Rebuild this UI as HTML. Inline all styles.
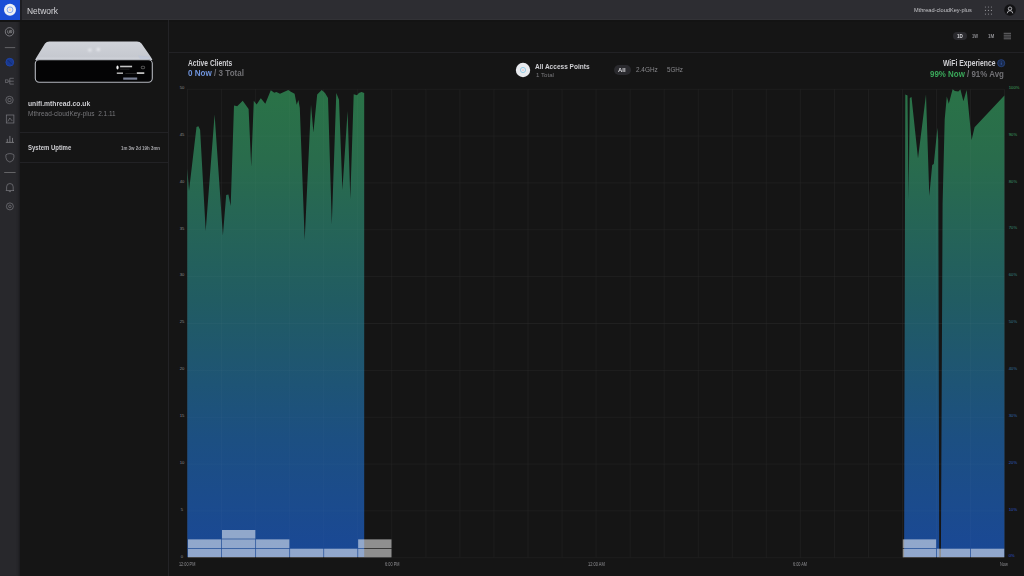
<!DOCTYPE html>
<html><head><meta charset="utf-8"><style>
*{margin:0;padding:0;box-sizing:border-box}
html,body{width:1024px;height:576px;overflow:hidden;background:#151515;font-family:"Liberation Sans",sans-serif;}
.abs{position:absolute}
.t{position:absolute;white-space:nowrap;line-height:1;transform-origin:0 0}
</style></head><body>
<div class="abs" style="left:0;top:0;width:1024px;height:20px;background:#2d2d32;border-bottom:1px solid #323236"></div>
<div class="abs" style="left:0;top:0;width:20px;height:20px;background:#1a4dd6"><svg width="20" height="20"><circle cx="10" cy="9.8" r="6" fill="#eef0f4"/><circle cx="10" cy="9.8" r="2.9" fill="none" stroke="#86aaf0" stroke-width="1"/><circle cx="10" cy="9.8" r="1.2" fill="#f2d8cc"/></svg></div>
<svg class="abs" style="left:983px;top:5.3px" width="12" height="12" fill="#9a9a9f"><circle cx="2.4" cy="2" r=".55"/><circle cx="5.4" cy="2" r=".55"/><circle cx="8.4" cy="2" r=".55"/><circle cx="2.4" cy="5.4" r=".55"/><circle cx="5.4" cy="5.4" r=".55"/><circle cx="8.4" cy="5.4" r=".55"/><circle cx="2.4" cy="9.1" r=".55"/><circle cx="5.4" cy="9.1" r=".55"/><circle cx="8.4" cy="9.1" r=".55"/></svg>
<svg class="abs" style="left:1003.6px;top:4.3px" width="12" height="12"><circle cx="6" cy="6" r="5.8" fill="#121214"/><circle cx="6" cy="4.6" r="1.7" fill="none" stroke="#d0d0d4" stroke-width=".8"/><path d="M3.2 9.3 Q3.5 6.6 6 6.6 Q8.5 6.6 8.8 9.3" fill="none" stroke="#d0d0d4" stroke-width=".8"/></svg>
<div class="abs" style="left:0;top:20px;width:20px;height:556px;background:#28282c;box-shadow:inset -2.5px 0 2px -1px #1c1c1f">
<svg width="20" height="556" style="position:absolute;left:0;top:0" fill="none" stroke="#7a7a80" stroke-width=".7">
<circle cx="9.5" cy="11.8" r="4.2" stroke="#9a9aa0"/><path d="M7.6 10.4 v2 q0 .9 .9 .9 q.9 0 .9 -.9 v-2 M10.2 13.3 v-2.9 h1 q.8 0 .8 .75 q0 .75 -.8 .75 h-1 M11.2 11.9 l.8 1.4" stroke="#a0a0a4" stroke-width=".55"/>
<line x1="4.8" y1="27.6" x2="15.2" y2="27.6" stroke="#7c7c80" stroke-width=".7"/>
<circle cx="9.8" cy="42.2" r="3.9" stroke="#1f44a8" fill="#19398f" stroke-width=".9"/><line x1="7.7" y1="40.1" x2="11.9" y2="44.3" stroke="#0e2466" stroke-width=".8"/>
<rect x="5.6" y="59.9" width="2.4" height="2.6" fill="none" stroke-width=".6"/><path d="M8 61.2 h1.8 M9.8 58.3 v5.8 M9.8 58.3 h4 M9.8 61.2 h4 M9.8 64.1 h4"/>
<circle cx="9.5" cy="80" r="3.7"/><rect x="8" y="78.5" width="3" height="3" rx=".8"/>
<rect x="6.3" y="95" width="7.6" height="8"/><path d="M7.8 101.5 l2 -3.5 l2.5 3"/>
<path d="M5.8 122.4 h8.2 M7.3 122.4 v-3.5 M9.9 122.4 v-6.5 M12.5 122.4 v-4.5" stroke-width=".9"/>
<path d="M9.9 133.6 q2.3 0 4 1.2 v2.6 q0 3.6 -4 4.7 q-4 -1.1 -4 -4.7 v-2.6 q1.7 -1.2 4 -1.2z"/>
<line x1="4.2" y1="152.5" x2="15.6" y2="152.5" stroke="#7c7c80" stroke-width=".7"/>
<path d="M6.6 170.5 v-3.6 q0 -3.4 3.3 -3.4 q3.3 0 3.3 3.4 v3.6 h.8 h-8.2 M8.8 171.6 h2.2"/>
<circle cx="9.9" cy="186.4" r="3.5"/><circle cx="9.9" cy="186.4" r="1.3"/>
</svg></div>
<div class="abs" style="left:0;top:20px;width:1024px;height:2px;background:#131313"></div><div class="abs" style="left:20px;top:0;width:1.5px;height:20px;background:#1e1e22"></div>
<div class="abs" style="left:167.5px;top:20px;width:1px;height:556px;background:#232326"></div>
<svg class="abs" style="left:30px;top:36px" width="130" height="52">
<defs><linearGradient id="tg" x1="0" y1="0" x2="0" y2="1"><stop offset="0" stop-color="#d0d3d9"/><stop offset=".8" stop-color="#c6c9d0"/><stop offset="1" stop-color="#d2d5dc"/></linearGradient>
<filter id="bl" x="-1" y="-1" width="3" height="3"><feGaussianBlur stdDeviation=".8"/></filter></defs>
<path d="M15 7.5 Q16.5 5.6 19.5 5.6 H107 Q110 5.6 111.5 7.5 L120.5 20.5 Q122 22.5 122.4 24 L5.2 24 Q5.6 22.5 7 20.5 Z" fill="url(#tg)"/>
<path d="M108 19.5 L119 20.5 L121 23 L110 23 Z" fill="#b9c3dc" opacity=".5"/>
<rect x="5.3" y="23.6" width="117" height="22.6" rx="4" fill="#040405" stroke="#b4b7be" stroke-width="1.1"/>
<circle cx="59.8" cy="14" r="1.6" fill="#f6f7fa" opacity=".75" filter="url(#bl)"/><circle cx="68.3" cy="13.4" r="1.6" fill="#f6f7fa" opacity=".75" filter="url(#bl)"/>
<ellipse cx="87.5" cy="31.5" rx="1.1" ry="2.1" fill="#f4f4f4"/>
<rect x="90.1" y="29.7" width="12" height="1.6" fill="#c4c4c4"/><rect x="90.1" y="32.8" width="9.4" height=".6" fill="#3a3a3a"/>
<rect x="111.3" y="30.3" width="3.3" height="2.4" rx=".8" fill="none" stroke="#9a9a9a" stroke-width=".55"/>
<rect x="86.8" y="36.4" width="6.2" height="1.6" fill="#aaaaaa"/><rect x="95.4" y="37" width="11" height=".5" fill="#4a4a4a"/><rect x="106.8" y="36.2" width="7.5" height="1.8" fill="#bdbdbd"/>
<rect x="93.2" y="41.5" width="14" height="2.2" fill="#7a8196"/>
</svg>
<div class="abs" style="left:20px;top:132.4px;width:148px;height:1px;background:#222225"></div>
<div class="abs" style="left:20px;top:161.6px;width:148px;height:1px;background:#222225"></div>
<div class="abs" style="left:168px;top:52px;width:856px;height:1px;background:#222225"></div>
<div class="abs" style="left:952.5px;top:31.8px;width:14.8px;height:8.6px;border-radius:4.3px;background:#2a2a2e"></div>
<svg class="abs" style="left:1003px;top:32px" width="9" height="8" stroke="#8e8e92" stroke-width=".7"><path d="M.7 1.3 h7.3 M.7 3.2 h7.3 M.7 5 h7.3 M.7 6.8 h7.3"/></svg>
<svg class="abs" style="left:514.6px;top:61.6px" width="16" height="16"><circle cx="8" cy="8" r="7.2" fill="#e8eaee"/><circle cx="8" cy="8" r="2.6" fill="none" stroke="#8fcbe6" stroke-width=".9"/><circle cx="8" cy="8" r=".6" fill="#e08a9a"/></svg>
<div class="abs" style="left:613.8px;top:64.8px;width:17.2px;height:10.2px;border-radius:5px;background:#2a2a2e"></div>
<svg class="abs" style="left:996.6px;top:59.1px" width="9" height="9"><circle cx="4.2" cy="4.2" r="3.6" fill="#192a4c" stroke="#28478a" stroke-width=".7"/><rect x="3.85" y="3.6" width=".7" height="2.2" fill="#3a66c0"/><rect x="3.85" y="2.5" width=".7" height=".6" fill="#3a66c0"/></svg>
<svg class="abs" style="left:0;top:0" width="1024" height="576">
<defs><linearGradient id="fg" gradientUnits="userSpaceOnUse" x1="0" y1="88" x2="0" y2="557">
<stop offset="0" stop-color="#2a7347"/><stop offset="0.15" stop-color="#296c4c"/><stop offset="0.45" stop-color="#215c62"/><stop offset="0.75" stop-color="#1c4f82"/><stop offset="1" stop-color="#1a4896"/></linearGradient></defs>
<g stroke="#1b1b1b" stroke-width="1"><line x1="187.60" y1="89.2" x2="187.60" y2="557.7"/><line x1="221.64" y1="89.2" x2="221.64" y2="557.7"/><line x1="255.68" y1="89.2" x2="255.68" y2="557.7"/><line x1="289.72" y1="89.2" x2="289.72" y2="557.7"/><line x1="323.76" y1="89.2" x2="323.76" y2="557.7"/><line x1="357.80" y1="89.2" x2="357.80" y2="557.7"/><line x1="391.84" y1="89.2" x2="391.84" y2="557.7"/><line x1="425.88" y1="89.2" x2="425.88" y2="557.7"/><line x1="459.92" y1="89.2" x2="459.92" y2="557.7"/><line x1="493.96" y1="89.2" x2="493.96" y2="557.7"/><line x1="528.00" y1="89.2" x2="528.00" y2="557.7"/><line x1="562.04" y1="89.2" x2="562.04" y2="557.7"/><line x1="596.08" y1="89.2" x2="596.08" y2="557.7"/><line x1="630.12" y1="89.2" x2="630.12" y2="557.7"/><line x1="664.16" y1="89.2" x2="664.16" y2="557.7"/><line x1="698.20" y1="89.2" x2="698.20" y2="557.7"/><line x1="732.24" y1="89.2" x2="732.24" y2="557.7"/><line x1="766.28" y1="89.2" x2="766.28" y2="557.7"/><line x1="800.32" y1="89.2" x2="800.32" y2="557.7"/><line x1="834.36" y1="89.2" x2="834.36" y2="557.7"/><line x1="868.40" y1="89.2" x2="868.40" y2="557.7"/><line x1="902.44" y1="89.2" x2="902.44" y2="557.7"/><line x1="936.48" y1="89.2" x2="936.48" y2="557.7"/><line x1="970.52" y1="89.2" x2="970.52" y2="557.7"/><line x1="1004.56" y1="89.2" x2="1004.56" y2="557.7"/><line x1="187" y1="89.20" x2="1004.5" y2="89.20"/><line x1="187" y1="136.06" x2="1004.5" y2="136.06"/><line x1="187" y1="182.92" x2="1004.5" y2="182.92"/><line x1="187" y1="229.78" x2="1004.5" y2="229.78"/><line x1="187" y1="276.64" x2="1004.5" y2="276.64"/><line x1="187" y1="323.50" x2="1004.5" y2="323.50"/><line x1="187" y1="370.36" x2="1004.5" y2="370.36"/><line x1="187" y1="417.22" x2="1004.5" y2="417.22"/><line x1="187" y1="464.08" x2="1004.5" y2="464.08"/><line x1="187" y1="510.94" x2="1004.5" y2="510.94"/><line x1="187" y1="557.80" x2="1004.5" y2="557.80"/></g>
<g fill="url(#fg)"><polygon points="187.3,557.0 187.3,168.7 189.0,191.0 196.5,127.0 198.4,126.2 200.1,129.8 205.7,231.0 214.6,114.5 222.9,235.4 226.2,195.0 228.4,194.5 230.7,206.0 234.0,105.5 237.2,106.2 242.7,100.7 248.6,109.0 251.2,166.8 253.8,100.7 256.6,104.5 260.8,98.2 265.3,103.8 270.8,90.2 274.3,92.7 276.4,92.0 280.0,93.7 288.3,89.9 290.4,91.6 294.6,93.7 296.7,104.8 298.4,100.0 299.8,108.0 304.7,240.0 311.0,104.8 313.4,132.6 317.2,94.4 321.7,89.9 325.0,93.0 328.0,97.9 331.8,224.6 336.3,93.0 339.0,99.8 342.4,190.0 347.6,111.0 350.3,199.0 353.7,94.2 357.0,95.3 358.9,93.0 361.6,92.0 364.2,93.0 364.2,557.0"/><polygon points="904.1,557.0 905.3,94.4 907.5,95.5 908.6,200.0 909.8,98.0 911.5,97.0 918.0,158.6 926.0,94.4 929.3,196.0 932.2,165.0 933.8,164.0 937.4,127.8 938.2,140.0 939.2,557.0"/><polygon points="940.9,557.0 942.6,204.0 944.7,119.4 946.8,96.5 948.8,103.8 952.6,89.2 954.9,91.0 958.3,91.6 960.4,89.6 963.4,101.2 966.7,90.0 971.6,140.0 974.6,127.2 1004.4,95.6 1004.4,557.0"/></g>
<g stroke="rgba(255,255,255,0.025)" stroke-width="1" fill="none"><polygon points="187.3,557.0 187.3,168.7 189.0,191.0 196.5,127.0 198.4,126.2 200.1,129.8 205.7,231.0 214.6,114.5 222.9,235.4 226.2,195.0 228.4,194.5 230.7,206.0 234.0,105.5 237.2,106.2 242.7,100.7 248.6,109.0 251.2,166.8 253.8,100.7 256.6,104.5 260.8,98.2 265.3,103.8 270.8,90.2 274.3,92.7 276.4,92.0 280.0,93.7 288.3,89.9 290.4,91.6 294.6,93.7 296.7,104.8 298.4,100.0 299.8,108.0 304.7,240.0 311.0,104.8 313.4,132.6 317.2,94.4 321.7,89.9 325.0,93.0 328.0,97.9 331.8,224.6 336.3,93.0 339.0,99.8 342.4,190.0 347.6,111.0 350.3,199.0 353.7,94.2 357.0,95.3 358.9,93.0 361.6,92.0 364.2,93.0 364.2,557.0" stroke="none"/><line x1="187.60" y1="89.2" x2="187.60" y2="557.7"/><line x1="221.64" y1="89.2" x2="221.64" y2="557.7"/><line x1="255.68" y1="89.2" x2="255.68" y2="557.7"/><line x1="289.72" y1="89.2" x2="289.72" y2="557.7"/><line x1="323.76" y1="89.2" x2="323.76" y2="557.7"/><line x1="357.80" y1="89.2" x2="357.80" y2="557.7"/><line x1="391.84" y1="89.2" x2="391.84" y2="557.7"/><line x1="425.88" y1="89.2" x2="425.88" y2="557.7"/><line x1="459.92" y1="89.2" x2="459.92" y2="557.7"/><line x1="493.96" y1="89.2" x2="493.96" y2="557.7"/><line x1="528.00" y1="89.2" x2="528.00" y2="557.7"/><line x1="562.04" y1="89.2" x2="562.04" y2="557.7"/><line x1="596.08" y1="89.2" x2="596.08" y2="557.7"/><line x1="630.12" y1="89.2" x2="630.12" y2="557.7"/><line x1="664.16" y1="89.2" x2="664.16" y2="557.7"/><line x1="698.20" y1="89.2" x2="698.20" y2="557.7"/><line x1="732.24" y1="89.2" x2="732.24" y2="557.7"/><line x1="766.28" y1="89.2" x2="766.28" y2="557.7"/><line x1="800.32" y1="89.2" x2="800.32" y2="557.7"/><line x1="834.36" y1="89.2" x2="834.36" y2="557.7"/><line x1="868.40" y1="89.2" x2="868.40" y2="557.7"/><line x1="902.44" y1="89.2" x2="902.44" y2="557.7"/><line x1="936.48" y1="89.2" x2="936.48" y2="557.7"/><line x1="970.52" y1="89.2" x2="970.52" y2="557.7"/><line x1="1004.56" y1="89.2" x2="1004.56" y2="557.7"/><line x1="187" y1="89.20" x2="1004.5" y2="89.20"/><line x1="187" y1="136.06" x2="1004.5" y2="136.06"/><line x1="187" y1="182.92" x2="1004.5" y2="182.92"/><line x1="187" y1="229.78" x2="1004.5" y2="229.78"/><line x1="187" y1="276.64" x2="1004.5" y2="276.64"/><line x1="187" y1="323.50" x2="1004.5" y2="323.50"/><line x1="187" y1="370.36" x2="1004.5" y2="370.36"/><line x1="187" y1="417.22" x2="1004.5" y2="417.22"/><line x1="187" y1="464.08" x2="1004.5" y2="464.08"/><line x1="187" y1="510.94" x2="1004.5" y2="510.94"/><line x1="187" y1="557.80" x2="1004.5" y2="557.80"/></g>
<g fill="rgba(255,255,255,0.52)"><rect x="187.95" y="548.70" width="33.34" height="8.65"/><rect x="187.95" y="539.35" width="33.34" height="8.65"/><rect x="221.99" y="548.70" width="33.34" height="8.65"/><rect x="221.99" y="539.35" width="33.34" height="8.65"/><rect x="221.99" y="530.00" width="33.34" height="8.65"/><rect x="256.03" y="548.70" width="33.34" height="8.65"/><rect x="256.03" y="539.35" width="33.34" height="8.65"/><rect x="290.07" y="548.70" width="33.34" height="8.65"/><rect x="324.11" y="548.70" width="33.34" height="8.65"/><rect x="358.15" y="548.70" width="33.34" height="8.65"/><rect x="358.15" y="539.35" width="33.34" height="8.65"/><rect x="902.79" y="548.70" width="33.34" height="8.65"/><rect x="902.79" y="539.35" width="33.34" height="8.65"/><rect x="936.83" y="548.70" width="33.34" height="8.65"/><rect x="970.87" y="548.70" width="33.34" height="8.65"/></g>
</svg>
<div class="t" style="left:176px;width:12px;text-align:center;top:85.96px;font-size:4.14px;color:#8a8a8e">50</div><div class="t" style="left:1008.8px;top:85.86px;font-size:4.14px;color:#40a860">100%</div><div class="t" style="left:176px;width:12px;text-align:center;top:132.82px;font-size:4.14px;color:#8a8a8e">45</div><div class="t" style="left:1008.8px;top:132.72px;font-size:4.14px;color:#3ea066">90%</div><div class="t" style="left:176px;width:12px;text-align:center;top:179.68px;font-size:4.14px;color:#8a8a8e">40</div><div class="t" style="left:1008.8px;top:179.58px;font-size:4.14px;color:#3c986e">80%</div><div class="t" style="left:176px;width:12px;text-align:center;top:226.54px;font-size:4.14px;color:#8a8a8e">35</div><div class="t" style="left:1008.8px;top:226.44px;font-size:4.14px;color:#3a8f78">70%</div><div class="t" style="left:176px;width:12px;text-align:center;top:273.40px;font-size:4.14px;color:#8a8a8e">30</div><div class="t" style="left:1008.8px;top:273.30px;font-size:4.14px;color:#388684">60%</div><div class="t" style="left:176px;width:12px;text-align:center;top:320.26px;font-size:4.14px;color:#8a8a8e">25</div><div class="t" style="left:1008.8px;top:320.16px;font-size:4.14px;color:#367c92">50%</div><div class="t" style="left:176px;width:12px;text-align:center;top:367.12px;font-size:4.14px;color:#8a8a8e">20</div><div class="t" style="left:1008.8px;top:367.02px;font-size:4.14px;color:#3472a2">40%</div><div class="t" style="left:176px;width:12px;text-align:center;top:413.98px;font-size:4.14px;color:#8a8a8e">15</div><div class="t" style="left:1008.8px;top:413.88px;font-size:4.14px;color:#3268b2">30%</div><div class="t" style="left:176px;width:12px;text-align:center;top:460.84px;font-size:4.14px;color:#8a8a8e">10</div><div class="t" style="left:1008.8px;top:460.74px;font-size:4.14px;color:#305fc2">20%</div><div class="t" style="left:176px;width:12px;text-align:center;top:507.70px;font-size:4.14px;color:#8a8a8e">5</div><div class="t" style="left:1008.8px;top:507.60px;font-size:4.14px;color:#2e58cc">10%</div><div class="t" style="left:176px;width:12px;text-align:center;top:554.56px;font-size:4.14px;color:#8a8a8e">0</div><div class="t" style="left:1008.8px;top:554.46px;font-size:4.14px;color:#2e52d4">0%</div>
<div class="t" style="left:26.60px;top:7.50px;font-size:8.21px;font-weight:400;color:#d4d4d8;transform:scaleX(1.030)">Network</div><div class="t" style="left:913.90px;top:7.10px;font-size:6.0px;font-weight:400;color:#c4c4c8;transform:scaleX(0.937)">Mthread-cloudKey-plus</div><div class="t" style="left:28.40px;top:101.10px;font-size:6.43px;font-weight:700;color:#cdcdd1;transform:scaleX(1.050)">unifi.mthread.co.uk</div><div class="t" style="left:28.40px;top:109.50px;font-size:7.0px;font-weight:400;color:#77777b;transform:scaleX(0.925)">Mthread-cloudKey-plus&nbsp;&nbsp;2.1.11</div><div class="t" style="left:28.40px;top:144.00px;font-size:7.43px;font-weight:700;color:#cfcfd3;transform:scaleX(0.806)">System Uptime</div><div class="t" style="left:120.50px;top:145.90px;font-size:5.14px;font-weight:700;color:#a8a8ac;transform:scaleX(0.861)">1m 3w 2d 19h 3mn</div><div class="t" style="left:188.20px;top:59.20px;font-size:8.43px;font-weight:700;color:#d0d0d4;transform:scaleX(0.793)">Active Clients</div><div class="t" style="left:188.20px;top:69.40px;font-size:8.43px;font-weight:700;color:#6e93db;transform:scaleX(0.960)">0 Now <span style="color:#717175">/ 3 Total</span></div><div class="t" style="left:535.30px;top:62.70px;font-size:7.71px;font-weight:700;color:#d0d0d4;transform:scaleX(0.847)">All Access Points</div><div class="t" style="left:536.20px;top:72.50px;font-size:5.57px;font-weight:400;color:#7a7a7e;transform:scaleX(1.100)">1 Total</div><div class="t" style="left:618.20px;top:66.90px;font-size:6.0px;font-weight:700;color:#dadade;transform:scaleX(0.987)">All</div><div class="t" style="left:636.20px;top:67.30px;font-size:6.57px;font-weight:400;color:#88888c;transform:scaleX(0.977)">2.4GHz</div><div class="t" style="left:667.00px;top:67.30px;font-size:6.57px;font-weight:400;color:#88888c;transform:scaleX(0.953)">5GHz</div><div class="t" style="left:942.80px;top:60.00px;font-size:8.14px;font-weight:700;color:#d0d0d4;transform:scaleX(0.838)">WiFi Experience</div><div class="t" style="left:929.70px;top:70.50px;font-size:8.14px;font-weight:700;color:#3aa85a;transform:scaleX(0.976)">99% Now <span style="color:#717175">/ 91% Avg</span></div><div class="t" style="left:957.20px;top:34.10px;font-size:5.14px;font-weight:700;color:#d8d8dc;transform:scaleX(0.886)">1D</div><div class="t" style="left:972.00px;top:34.10px;font-size:5.14px;font-weight:700;color:#8e8e92;transform:scaleX(0.787)">1W</div><div class="t" style="left:988.00px;top:34.10px;font-size:5.14px;font-weight:700;color:#8e8e92;transform:scaleX(0.900)">1M</div><div class="t" style="left:179.15px;top:562.70px;font-size:4.57px;font-weight:400;color:#909094;transform:scaleX(0.836)">12:00 PM</div><div class="t" style="left:384.56px;top:562.70px;font-size:4.57px;font-weight:400;color:#909094;transform:scaleX(0.851)">6:00 PM</div><div class="t" style="left:587.75px;top:562.70px;font-size:4.57px;font-weight:400;color:#909094;transform:scaleX(0.869)">12:00 AM</div><div class="t" style="left:793.07px;top:562.70px;font-size:4.57px;font-weight:400;color:#909094;transform:scaleX(0.839)">6:00 AM</div><div class="t" style="left:1000.42px;top:562.70px;font-size:4.57px;font-weight:400;color:#909094;transform:scaleX(0.839)">Now</div>
</body></html>
